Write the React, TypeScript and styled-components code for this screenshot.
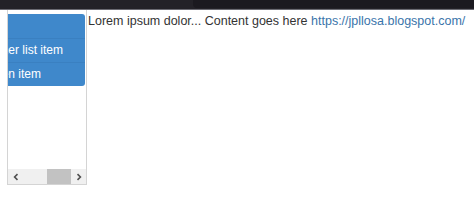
import styled, { createGlobalStyle } from "styled-components";

const GlobalStyle = createGlobalStyle`
    html, body {
        margin: 0;
        padding: 0;
        background: #ffffff;
    }
    body {
        font-family: "Liberation Sans", Arial, sans-serif;
        font-size: 12px;
        color: #333333;
    }
`

const items = ["First", "Another list item", "Hidden item"];

const App = () => {
    return (
        <>
            <GlobalStyle />
            <TopBar>
                <Tab />
            </TopBar>
            <Page>
                <Sidebar>
                    <ScrollArea>
                        <ListGroup>
                            {items.map((item, i) => (
                                <ListItem key={i} $first={i === 0} $last={i === items.length - 1}>
                                    {item}
                                </ListItem>
                            ))}
                        </ListGroup>
                    </ScrollArea>
                    <ScrollBar>
                        <Arrow>
                            <svg width="8" height="8" viewBox="0 0 8 8">
                                <path d="M5.5 1.2 L2.6 4 L5.5 6.8" fill="none" stroke="#505050" strokeWidth="1.6" />
                            </svg>
                        </Arrow>
                        <Track>
                            <Thumb />
                        </Track>
                        <Arrow>
                            <svg width="8" height="8" viewBox="0 0 8 8">
                                <path d="M2.5 1.2 L5.4 4 L2.5 6.8" fill="none" stroke="#505050" strokeWidth="1.6" />
                            </svg>
                        </Arrow>
                    </ScrollBar>
                </Sidebar>
                <Content>
                    Lorem ipsum dolor... Content goes here <a href="https://jpllosa.blogspot.com/">https://jpllosa.blogspot.com/</a>
                </Content>
            </Page>
        </>
    );
}

const TopBar = styled.div`
    height: 9px;
    background: #232228;
    border-bottom: 1px solid #6a6a72;
    position: relative;
    overflow: hidden;
`
const Tab = styled.div`
    position: absolute;
    left: 193px;
    top: -4px;
    right: 0;
    height: 12px;
    background: #1b1a20;
    border-radius: 4px 0 0 4px;
`
const Page = styled.div`
    display: flex;
    align-items: flex-start;
    padding-left: 7px;
    gap: 1px;
`
const Sidebar = styled.div`
    width: 78px;
    height: 174px;
    border: 1px solid #d4d4d4;
    border-top: 0;
    display: flex;
    flex-direction: column;
`
const ScrollArea = styled.div`
    flex: 1;
    overflow: hidden;
    padding-top: 4px;
`
const ListGroup = styled.div`
    width: 123px;
    margin-left: -46px;
    display: flex;
    flex-direction: column;
`
const ListItem = styled.div<{ $first: boolean; $last: boolean }>`
    height: 24px;
    line-height: 23px;
    padding-left: 15px;
    box-sizing: border-box;
    background: #3f88cb;
    color: #ffffff;
    font-size: 12px;
    white-space: nowrap;
    border-top: ${p => (p.$first ? "none" : "1px solid #3a80c1")};
    border-radius: ${p => (p.$first ? "0 3px 0 0" : p.$last ? "0 0 3px 0" : "0")};
`
const ScrollBar = styled.div`
    height: 15px;
    display: flex;
    background: #f0f0f0;
`
const Arrow = styled.div`
    width: 15px;
    display: flex;
    align-items: center;
    justify-content: center;
`
const Track = styled.div`
    flex: 1;
    display: flex;
    justify-content: flex-end;
`
const Thumb = styled.div`
    width: 24px;
    background: #c2c2c2;
`
const Content = styled.div`
    padding-top: 3px;
    font-size: 12.5px;
    line-height: 16px;
    white-space: nowrap;
    a {
        color: #3a74aa;
        text-decoration: none;
    }
`

export default App;
